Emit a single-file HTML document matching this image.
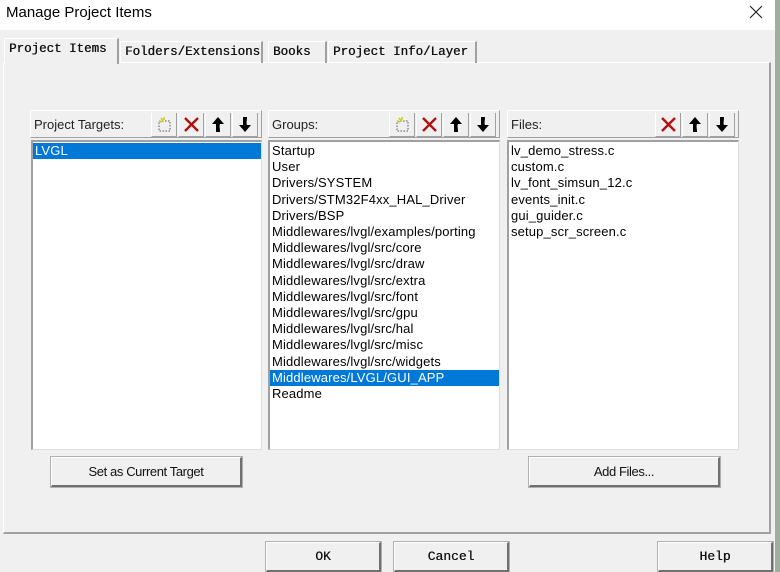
<!DOCTYPE html><html><head><style>
*{box-sizing:border-box;margin:0;padding:0}
body{width:780px;height:572px;background:#f0f0f0;font-family:"Liberation Sans",sans-serif;position:relative;overflow:hidden}
.a{position:absolute}
.title{left:0;top:0;width:775px;height:30px;background:#fff;font-size:15px;padding:4px 0 0 6px;color:#000}
.rs{left:775px;top:0;width:5px;height:572px;background:#9fb09a}
.tab{top:41px;height:22px;font-family:"Liberation Mono",monospace;font-size:12.5px;border-top:1px solid #fff;border-left:1px solid #fff;border-right:2px solid #a0a0a0;padding:3px 0 0 4px;color:#111;text-shadow:0.4px 0 0 #111}
.panel{left:3px;top:62px;width:768px;height:472px;border:1px solid #fff;border-right:2px solid #a0a0a0;border-bottom:2px solid #a0a0a0}
.hdr{height:28px;border:1px solid #fff;border-right:1px solid #a0a0a0;border-bottom:1px solid #a0a0a0;font-size:13px;padding:6px 0 0 3px;color:#222}
.list{border-top:2px solid #a0a0a0;border-left:2px solid #a0a0a0;border-right:1px solid #ddd;border-bottom:1px solid #ddd;background:#fff;font-size:13px;line-height:16.2px;padding:1px 0 0 2px;color:#000;letter-spacing:0.15px}
.list div{padding-left:2px;margin-left:-2px;white-space:nowrap}
.sel{background:#0078d7;color:#fff}
.ib{top:2px;width:26px;height:24px;border-left:1px solid #fff;border-right:1px solid #a0a0a0;border-bottom:1px solid #a0a0a0;display:flex;align-items:center;justify-content:center}
.btn{height:30px;border:1px solid #fff;border-right:2px solid #707070;border-bottom:2px solid #707070;outline:1px solid #b0b0b0;font-size:13px;display:flex;align-items:center;justify-content:center;color:#111;letter-spacing:-0.4px}
.bb{font-family:"Liberation Mono",monospace;letter-spacing:0;text-shadow:0.3px 0 0 #111}
</style></head><body>
<div class="a title">Manage Project Items</div>
<svg class="a" style="left:749px;top:5px" width="14" height="14"><path d="M1 1L13 13M13 1L1 13" stroke="#222" stroke-width="1.2"/></svg>
<div class="a rs"></div>
<div class="a panel"></div>
<div class="a tab" style="left:4px;top:38px;height:26px;width:115px;background:#f0f0f0;z-index:2">Project Items</div>
<div class="a tab" style="left:120px;width:143px">Folders/Extensions</div>
<div class="a tab" style="left:268px;width:59px">Books</div>
<div class="a tab" style="left:328px;width:149px">Project Info/Layer</div>

<svg width="0" height="0" style="position:absolute"><defs>
<g id="nw"><rect x="3" y="5" width="11" height="10" fill="none" stroke="#555" stroke-dasharray="1.5 1.5"/><path d="M5 2l2 3M3 5l3 1M8 1l0 3" stroke="#cc0" stroke-width="1.5"/></g>
<g id="x"><path d="M2 2L15 15M15 2L2 15" stroke="#b01010" stroke-width="2.4"/></g>
<g id="up"><path d="M8 1L2 8h4v8h4c0-4-1-6 0-8h4z" fill="#000"/></g>
<g id="dn"><path d="M8 16L2 9h4V1h4c0 4-1 6 0 8h4z" fill="#000"/></g>
</defs></svg>

<div class="a hdr" style="left:30px;top:110px;width:232px">Project Targets:
<div class="a ib" style="left:120px"><svg width="17" height="17"><use href="#nw"/></svg></div>
<div class="a ib" style="left:147px"><svg width="17" height="17"><use href="#x"/></svg></div>
<div class="a ib" style="left:174px"><svg width="17" height="17"><use href="#up"/></svg></div>
<div class="a ib" style="left:201px"><svg width="17" height="17"><use href="#dn"/></svg></div>
</div>
<div class="a hdr" style="left:268px;top:110px;width:232px">Groups:
<div class="a ib" style="left:120px"><svg width="17" height="17"><use href="#nw"/></svg></div>
<div class="a ib" style="left:147px"><svg width="17" height="17"><use href="#x"/></svg></div>
<div class="a ib" style="left:174px"><svg width="17" height="17"><use href="#up"/></svg></div>
<div class="a ib" style="left:201px"><svg width="17" height="17"><use href="#dn"/></svg></div>
</div>
<div class="a hdr" style="left:507px;top:110px;width:232px">Files:
<div class="a ib" style="left:147px"><svg width="17" height="17"><use href="#x"/></svg></div>
<div class="a ib" style="left:174px"><svg width="17" height="17"><use href="#up"/></svg></div>
<div class="a ib" style="left:201px"><svg width="17" height="17"><use href="#dn"/></svg></div>
</div>

<div class="a list" style="left:31px;top:140px;width:231px;height:310px"><div class="sel">LVGL</div></div>
<div class="a list" style="left:268px;top:140px;width:232px;height:310px">
<div>Startup</div><div>User</div><div>Drivers/SYSTEM</div><div>Drivers/STM32F4xx_HAL_Driver</div><div>Drivers/BSP</div><div>Middlewares/lvgl/examples/porting</div><div>Middlewares/lvgl/src/core</div><div>Middlewares/lvgl/src/draw</div><div>Middlewares/lvgl/src/extra</div><div>Middlewares/lvgl/src/font</div><div>Middlewares/lvgl/src/gpu</div><div>Middlewares/lvgl/src/hal</div><div>Middlewares/lvgl/src/misc</div><div>Middlewares/lvgl/src/widgets</div><div class="sel" style="width:229px">Middlewares/LVGL/GUI_APP</div><div>Readme</div></div>
<div class="a list" style="left:507px;top:140px;width:232px;height:310px">
<div>lv_demo_stress.c</div><div>custom.c</div><div>lv_font_simsun_12.c</div><div>events_init.c</div><div>gui_guider.c</div><div>setup_scr_screen.c</div></div>

<div class="a btn" style="left:51px;top:457px;width:191px">Set as Current Target</div>
<div class="a btn" style="left:529px;top:457px;width:191px">Add Files...</div>
<div class="a btn bb" style="left:266px;top:542px;width:115px">OK</div>
<div class="a btn bb" style="left:394px;top:542px;width:115px">Cancel</div>
<div class="a btn bb" style="left:658px;top:542px;width:115px">Help</div>
</body></html>
